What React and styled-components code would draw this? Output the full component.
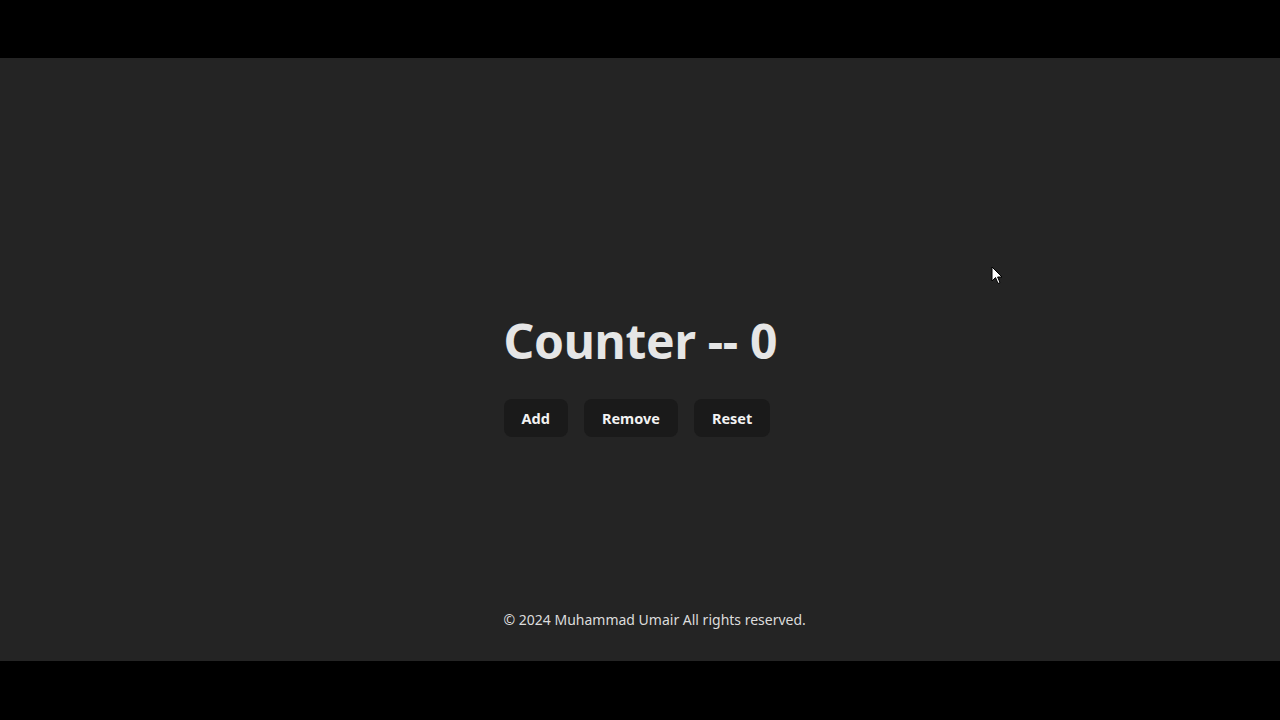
import React, { useState } from 'react'
import styled, { createGlobalStyle } from 'styled-components'

// Global
const GlobalStyle = createGlobalStyle`
  html, body {
    margin: 0;
    padding: 0;
    background-color: #000;
  }
  body {
    font-family: 'Noto Sans', 'Open Sans', sans-serif;
    color: rgba(255, 255, 255, 0.87);
  }
`

// Styles
const Frame = styled.div`
  display: flex;
  flex-direction: column;
  height: 720px;
  padding: 58px 0 59px;
  box-sizing: border-box;
  position: relative;
`
const Screen = styled.main`
  flex: 1;
  display: flex;
  flex-direction: column;
  align-items: center;
  background-color: #242424;
`
const Column = styled.div`
  display: flex;
  flex-direction: column;
  align-items: flex-start;
  width: 273px;
  padding-top: 254px;
  flex: 1;
`
const Title = styled.h1`
  margin: 0;
  font-size: 48px;
  font-weight: 700;
  line-height: 1.2;
  white-space: nowrap;
  color: #e6e6e6;
  letter-spacing: -0.3px;
`
const Buttons = styled.div`
  display: flex;
  gap: 16px;
  margin-top: 29px;
`
const Button = styled.button`
  height: 38px;
  padding: 0 17px;
  border: 1px solid transparent;
  border-radius: 8px;
  background-color: #1a1a1a;
  color: #f2f2f2;
  font-family: inherit;
  font-size: 14.5px;
  font-weight: 700;
  cursor: pointer;
`
const Footer = styled.footer`
  margin-top: auto;
  margin-bottom: 32px;
  font-size: 14px;
  white-space: nowrap;
  color: #dcdcdc;
`
const Cursor = styled.svg`
  position: absolute;
  left: 991px;
  top: 266px;
`

const App = () => {
  const [count, setCount] = useState(0)

  return (
    <>
      <GlobalStyle />
      <Frame>
        <Screen>
          <Column>
            <Title>Counter -- {count}</Title>
            <Buttons>
              <Button onClick={() => setCount(count + 1)}>Add</Button>
              <Button onClick={() => setCount(count - 1)}>Remove</Button>
              <Button onClick={() => setCount(0)}>Reset</Button>
            </Buttons>
            <Footer>© 2024 Muhammad Umair All rights reserved.</Footer>
          </Column>
        </Screen>
        <Cursor width="12" height="19" viewBox="0 0 12 19">
          <path d="M1 1 L1 15 L4.5 11.5 L7 17.5 L9 16.6 L6.6 11 L11 11 Z" fill="#fff" stroke="#000" strokeWidth="1" />
        </Cursor>
      </Frame>
    </>
  )
}

export default App
